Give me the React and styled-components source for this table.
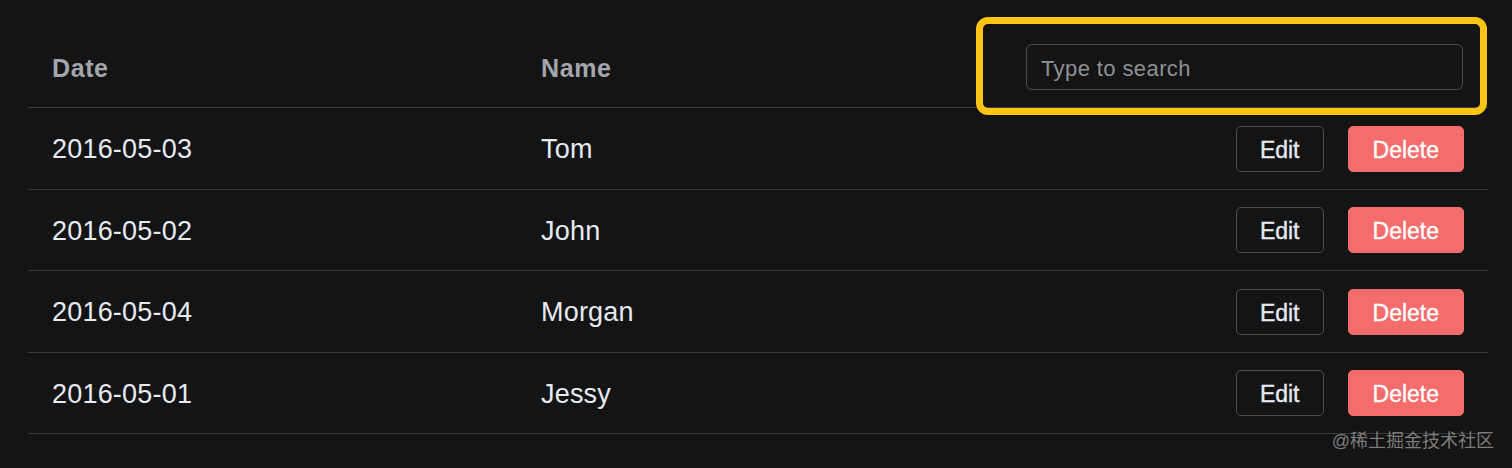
import React from 'react';
import styled, { createGlobalStyle } from 'styled-components';

const GlobalStyle = createGlobalStyle`
	html, body {
		margin: 0;
		padding: 0;
		background: #141414;
	}
	body {
		font-family: 'Liberation Sans', Arial, 'Noto Sans CJK SC', sans-serif;
		color: #e5eaf3;
	}
`;

const Page = styled.div`
	position: relative;
	width: 1512px;
	height: 468px;
	padding: 28px 24px 0 28px;
	box-sizing: border-box;
	overflow: hidden;
`;

const Table = styled.table`
	width: 1460px;
	table-layout: fixed;
	border-collapse: separate;
	border-spacing: 0;
`;

const HeadCell = styled.th`
	position: relative;
	box-sizing: border-box;
	height: 80px;
	padding: 1px ${(p) => (p.$right ? '25px' : '24px')} 0 24px;
	border-bottom: 1px solid #393a3c;
	font-size: 25px;
	font-weight: 700;
	letter-spacing: 0.6px;
	color: #a3a6ad;
	text-align: ${(p) => (p.$right ? 'right' : 'left')};
	vertical-align: middle;
`;

const Cell = styled.td`
	box-sizing: border-box;
	height: 81.5px;
	padding: 3px 24px 0 24px;
	border-bottom: 1px solid #393a3c;
	font-size: 27px;
	letter-spacing: 0.2px;
	color: #e5eaf3;
	text-align: ${(p) => (p.$right ? 'right' : 'left')};
	vertical-align: middle;
`;

const SearchInput = styled.input`
	display: block;
	box-sizing: border-box;
	width: 100%;
	height: 46px;
	margin-top: -2px;
	padding: 3px 14px 0;
	border: 1px solid #4c4d4f;
	border-radius: 6px;
	background: transparent;
	font-family: 'Liberation Sans', Arial, sans-serif;
	font-size: 22px;
	letter-spacing: 0.4px;
	color: #e5eaf3;
	outline: none;

	&::placeholder {
		color: #8d9095;
	}
`;

const Highlight = styled.div`
	position: absolute;
	left: -26px;
	right: 1px;
	top: -11px;
	bottom: -8px;
	border: 7px solid #fcc514;
	border-radius: 12px;
	pointer-events: none;
`;

const Actions = styled.div`
	display: flex;
	justify-content: flex-end;
	gap: 24px;
	margin-top: -2px;
`;

const Button = styled.button`
	box-sizing: border-box;
	height: 46px;
	padding: 3px ${(p) => (p.$danger ? '24px' : '23px')} 0;
	border: 1px solid ${(p) => (p.$danger ? '#f56c6c' : '#4c4d4f')};
	border-radius: 5px;
	background: ${(p) => (p.$danger ? '#f56c6c' : 'transparent')};
	color: ${(p) => (p.$danger ? '#ffffff' : '#e5eaf3')};
	font-family: 'Liberation Sans', Arial, sans-serif;
	font-size: 23px;
	font-weight: 400;
	-webkit-text-stroke: 0.35px currentColor;
	cursor: pointer;
`;

const Watermark = styled.div`
	position: absolute;
	right: 18px;
	bottom: 16px;
	font-family: 'Liberation Sans', 'Noto Sans CJK SC', sans-serif;
	font-size: 18px;
	color: rgba(160, 160, 160, 0.75);
`;

const rows = [
	{ date: '2016-05-03', name: 'Tom' },
	{ date: '2016-05-02', name: 'John' },
	{ date: '2016-05-04', name: 'Morgan' },
	{ date: '2016-05-01', name: 'Jessy' },
];

const App = () => {
	return (
		<>
			<GlobalStyle />
			<Page>
				<Table>
					<colgroup>
						<col style={{ width: 489 }} />
						<col style={{ width: 485 }} />
						<col style={{ width: 486 }} />
					</colgroup>
					<thead>
						<tr>
							<HeadCell>Date</HeadCell>
							<HeadCell>Name</HeadCell>
							<HeadCell $right>
								<SearchInput placeholder="Type to search" />
								<Highlight />
							</HeadCell>
						</tr>
					</thead>
					<tbody>
						{rows.map((row) => (
							<tr key={row.date}>
								<Cell>{row.date}</Cell>
								<Cell>{row.name}</Cell>
								<Cell $right>
									<Actions>
										<Button>Edit</Button>
										<Button $danger>Delete</Button>
									</Actions>
								</Cell>
							</tr>
						))}
					</tbody>
				</Table>
				<Watermark>@稀土掘金技术社区</Watermark>
			</Page>
		</>
	);
};

export default App;
